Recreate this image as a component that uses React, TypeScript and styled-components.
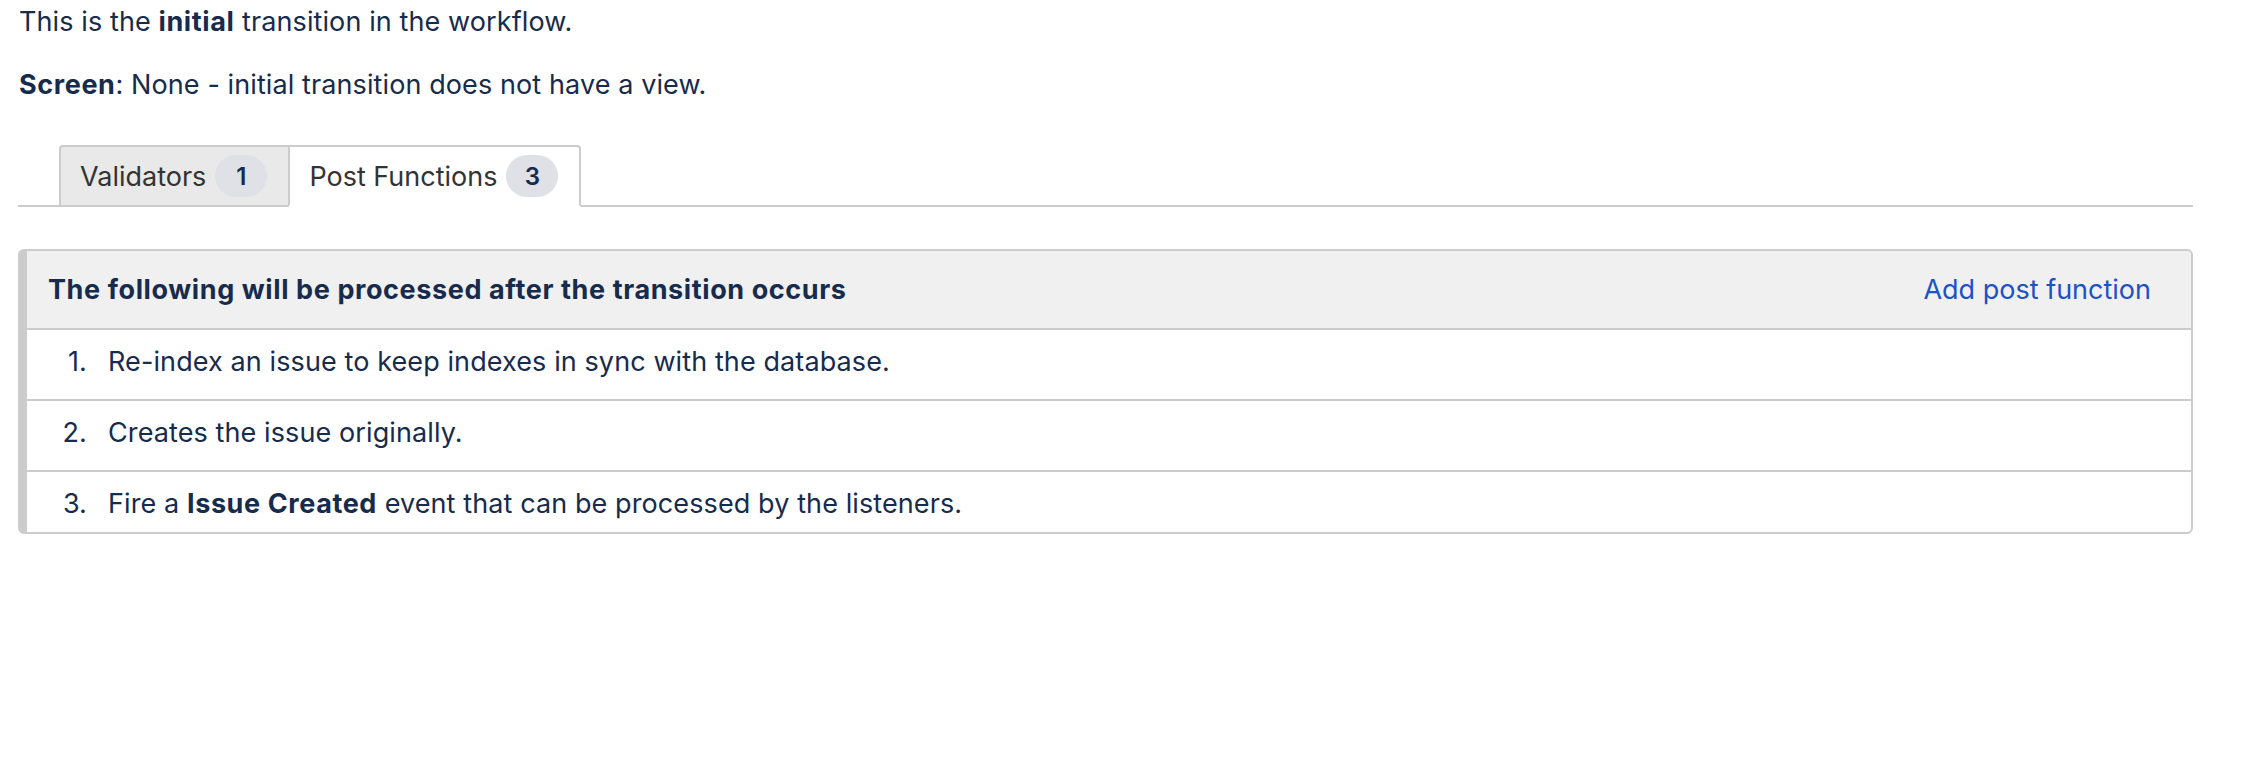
import React from 'react';
import styled, { createGlobalStyle } from 'styled-components';

const GlobalStyle = createGlobalStyle`
  html, body {
    margin: 0;
    padding: 0;
    background: #ffffff;
  }
  body {
    font-family: Inter, "Liberation Sans", sans-serif;
    color: #172b4d;
    letter-spacing: 0.1px;
  }
  b, strong {
    font-weight: 700;
    letter-spacing: 0.6px;
  }
`;

const Page = styled.div`
  width: 2175px;
  margin-left: 18px;
  padding-top: 2px;
  font-size: 27px;
`;

const Para = styled.p`
  margin: 0 0 23px;
  line-height: 40px;
  padding-left: 1px;
`;

const TabBar = styled.div`
  display: flex;
  margin-top: 40px;
  padding-left: 41px;
  border-bottom: 2px solid #cccccc;
`;

const Tab = styled.div<{ $active?: boolean }>`
  display: flex;
  align-items: center;
  gap: 9px;
  height: 62px;
  box-sizing: border-box;
  padding: 0 21px 0 19px;
  margin-bottom: -2px;
  color: #333333;
  letter-spacing: 0;
  background: ${(p) => (p.$active ? '#ffffff' : '#e9e9e9')};
  border: 2px solid #cccccc;
  border-bottom-color: ${(p) => (p.$active ? '#ffffff' : '#cccccc')};
  border-right-width: ${(p) => (p.$active ? '2px' : '0')};
  border-radius: ${(p) => (p.$active ? '0 4px 0 0' : '4px 0 0 0')};
  cursor: pointer;
`;

const Badge = styled.span`
  display: inline-flex;
  align-items: center;
  justify-content: center;
  min-width: 52px;
  height: 42px;
  border-radius: 21px;
  background: #dfe1e6;
  color: #172b4d;
  font-size: 24px;
  font-weight: 600;
`;

const Panel = styled.div`
  margin-top: 42px;
  border: 2px solid #cccccc;
  border-left-width: 9px;
  border-radius: 6px;
  overflow: hidden;
`;

const PanelHeader = styled.div`
  display: flex;
  align-items: center;
  justify-content: space-between;
  height: 77px;
  padding: 0 40px 0 21px;
  background: #f0f0f0;
  border-bottom: 2px solid #cccccc;
`;

const HeaderTitle = styled.h3`
  margin: 0;
  font-size: 27px;
  font-weight: 700;
  letter-spacing: 0.6px;
  color: #172b4d;
`;

const AddLink = styled.a`
  color: #1d51c6;
  letter-spacing: 0;
  text-decoration: none;
  cursor: pointer;
`;

const List = styled.ol`
  margin: 0;
  padding: 0;
  list-style: none;
`;

const Item = styled.li`
  display: flex;
  align-items: center;
  line-height: 40px;
  padding: 12px 0 17px;
  border-bottom: 2px solid #cccccc;

  &:last-child {
    border-bottom: none;
    padding-bottom: 8px;
  }
`;

const Num = styled.span`
  width: 60px;
  flex-shrink: 0;
  text-align: right;
  margin-right: 21px;
`;

const functions: React.ReactNode[] = [
  'Re-index an issue to keep indexes in sync with the database.',
  'Creates the issue originally.',
  <>
    Fire a <b>Issue Created</b> event that can be processed by the listeners.
  </>,
];

const App = () => {
  return (
    <>
      <GlobalStyle />
      <Page>
        <Para>
          This is the <b>initial</b> transition in the workflow.
        </Para>
        <Para>
          <b>Screen</b>: None - initial transition does not have a view.
        </Para>

        <TabBar>
          <Tab>
            Validators <Badge>1</Badge>
          </Tab>
          <Tab $active>
            Post Functions <Badge>3</Badge>
          </Tab>
        </TabBar>

        <Panel>
          <PanelHeader>
            <HeaderTitle>The following will be processed after the transition occurs</HeaderTitle>
            <AddLink>Add post function</AddLink>
          </PanelHeader>
          <List>
            {functions.map((f, i) => (
              <Item key={i}>
                <Num>{i + 1}.</Num>
                <span>{f}</span>
              </Item>
            ))}
          </List>
        </Panel>
      </Page>
    </>
  );
};

export default App;
